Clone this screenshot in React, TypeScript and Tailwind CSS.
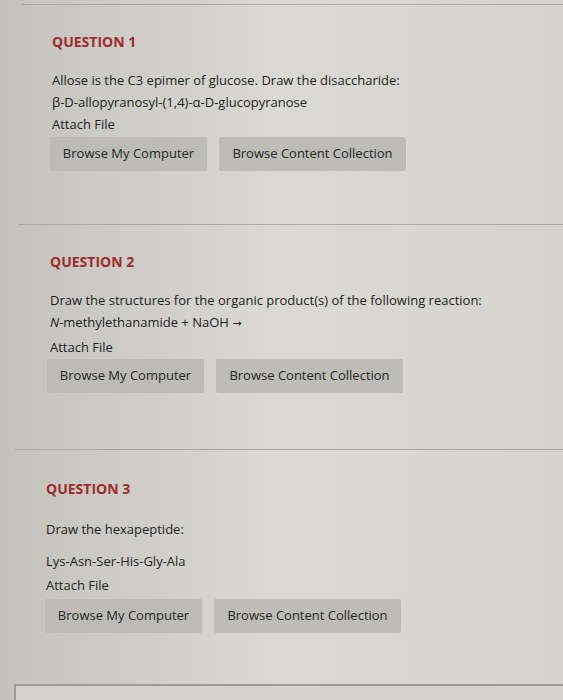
import React from 'react';

const Buttons = ({ className }: { className: string }) => (
    <div className={`flex gap-3 ${className}`}>
        <button className="h-[34px] w-[157px] bg-[#bcbbb6] text-[13px] text-[#262626] rounded-[2px]">
            Browse My Computer
        </button>
        <button className="h-[34px] w-[187px] bg-[#bdbcb7] text-[13px] text-[#262626] rounded-[2px]">
            Browse Content Collection
        </button>
    </div>
);

const App = () => {
    return (
        <div
            className="h-[700px] w-[563px] overflow-hidden bg-linear-to-r from-[#c3c2bd] via-[#dad9d4] to-[#d4d3ce] text-[#1f1f1f]"
            style={{ fontFamily: '"Open Sans", "Liberation Sans", sans-serif' }}
        >
            {/* question 1 */}
            <section className="ml-[22px] mt-[4px] h-[220px] border-t border-[#a9a8a3] pl-[30px] pt-[27px]">
                <h2 className="text-[14px] font-bold leading-[20px] text-[#9e2b2b]">QUESTION 1</h2>
                <div className="mt-[17px] text-[13px] leading-[22px]">
                    <p>Allose is the C3 epimer of glucose. Draw the disaccharide:</p>
                    <p>β-D-allopyranosyl-(1,4)-α-D-glucopyranose</p>
                    <p>Attach File</p>
                </div>
                <Buttons className="mt-[2px] -ml-[2px]" />
            </section>

            {/* question 2 */}
            <section className="ml-[18px] h-[225px] border-t border-[#a9a8a3] pl-[32px] pt-[27px]">
                <h2 className="text-[14px] font-bold leading-[20px] text-[#9e2b2b]">QUESTION 2</h2>
                <div className="mt-[17px] text-[13px] leading-[22px]">
                    <p>Draw the structures for the organic product(s) of the following reaction:</p>
                    <p>
                        <i>N</i>-methylethanamide + NaOH <span style={{ fontFamily: '"DejaVu Sans", sans-serif' }} className="text-[11px]">→</span>
                    </p>
                    <p className="mt-[1px]">Attach File</p>
                </div>
                <Buttons className="mt-[1px] -ml-[3px]" />
            </section>

            {/* question 3 */}
            <section className="ml-[15px] h-[235px] border-t border-[#a9a8a3] pl-[31px] pt-[29px]">
                <h2 className="text-[14px] font-bold leading-[20px] text-[#9e2b2b]">QUESTION 3</h2>
                <div className="mt-[19px] text-[13px] leading-[22px]">
                    <p>Draw the hexapeptide:</p>
                    <p className="mt-[10px]">Lys-Asn-Ser-His-Gly-Ala</p>
                    <p className="mt-[2px]">Attach File</p>
                </div>
                <Buttons className="mt-[3px] -ml-[1px]" />
            </section>

            <div className="ml-[14px] h-[40px] border-t-2 border-l-2 border-[#9c9b96] bg-[#d3d2cd]" />
        </div>
    );
};

export default App;
